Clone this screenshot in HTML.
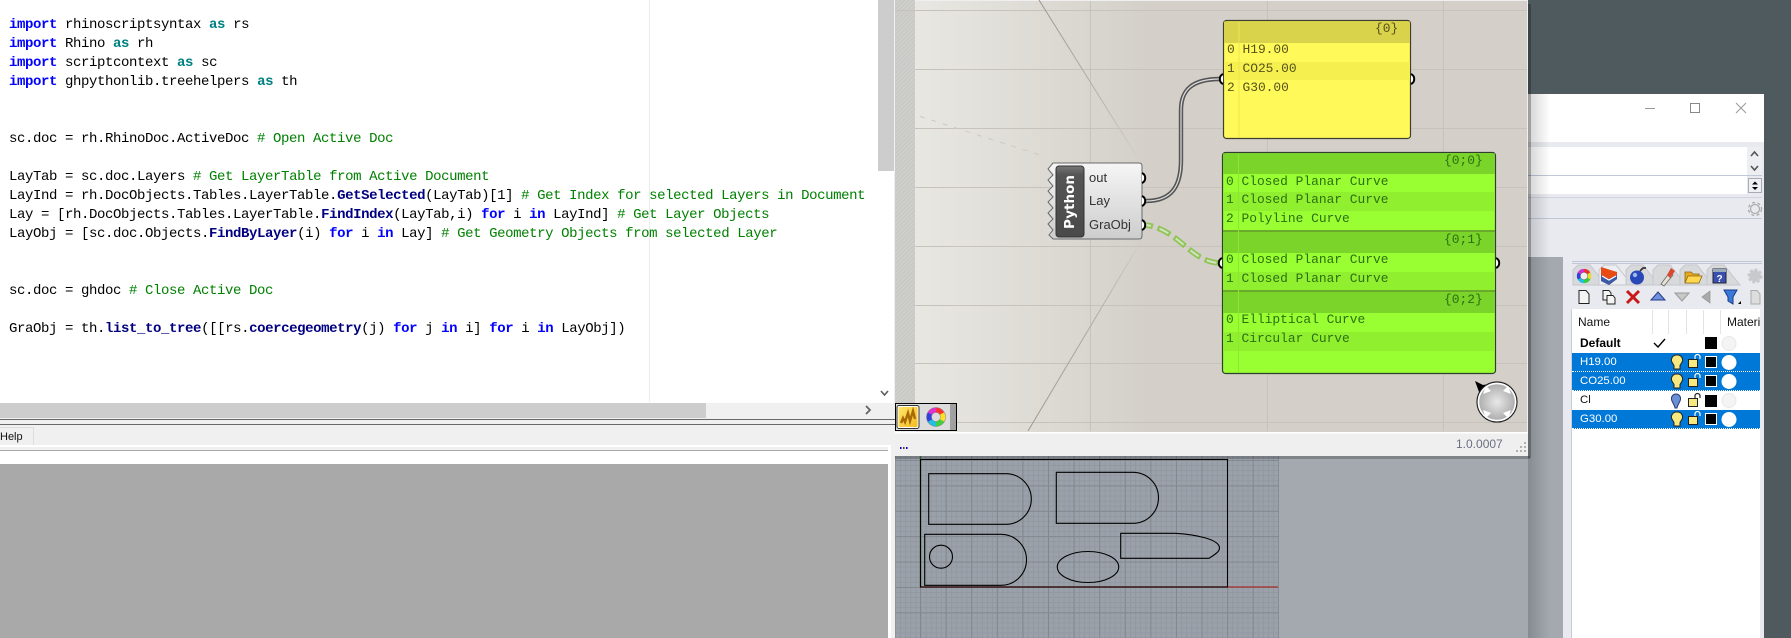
<!DOCTYPE html>
<html><head><meta charset="utf-8"><style>
html,body{margin:0;padding:0}
body{width:1791px;height:638px;overflow:hidden;position:relative;background:#4f5a5f;font-family:"Liberation Sans",sans-serif}
.a{position:absolute}
.c{position:absolute;left:9px;font:14px/19px "Liberation Mono",monospace;letter-spacing:-.4px;white-space:pre;color:#000;height:19px}
.k{color:#00f;font-weight:bold}.t{color:#008080;font-weight:bold}.g{color:#008000}.f{color:#000080;font-weight:bold}
.p{position:absolute;font:12.9px/16px "Liberation Mono",monospace;white-space:pre}
.y{color:#55521a}.n{color:#2d6f10}
.l{position:absolute;font-size:13px;line-height:16px;color:#333}
.r{position:absolute;font-size:11.4px;line-height:19px;white-space:pre}
.sel{position:absolute;left:1572px;width:188px;background:#0078d7;border-bottom:1px dotted #fff;box-sizing:border-box}
</style></head><body>

<!-- Rhino window behind -->
<div class="a" style="left:1528px;top:94px;width:236px;height:544px;background:#e8eaef"></div>
<div class="a" style="left:1528px;top:94px;width:236px;height:48px;background:#fff"></div>
<div class="a" style="left:1528px;top:147px;width:219px;height:28px;background:#fff"></div>
<div class="a" style="left:1528px;top:175px;width:234px;height:1px;background:#c0c8d8"></div>
<div class="a" style="left:1528px;top:176px;width:219px;height:18px;background:#fff"></div>
<div class="a" style="left:1528px;top:197px;width:234px;height:1px;background:#d0d4de"></div>
<div class="a" style="left:1528px;top:218px;width:234px;height:1px;background:#c0c8d8"></div>
<div class="a" style="left:1572px;top:261px;width:190px;height:1px;background:#c0c8d8"></div>
<div class="a" style="left:1572px;top:263px;width:190px;height:1px;background:#c0c8d8"></div>

<!-- viewport -->
<div class="a" style="left:895px;top:257px;width:668px;height:381px;background:#a3a9af"></div>
<div class="a" style="left:895px;top:456px;width:384px;height:182px;background-color:#9ba1ab;background-image:linear-gradient(90deg,#83878e 1px,transparent 1px),linear-gradient(#83878e 1px,transparent 1px),linear-gradient(90deg,#93989f 1px,transparent 1px),linear-gradient(#93989f 1px,transparent 1px);background-size:25.6px 25.4px,25.6px 25.4px,5.12px 5.08px,5.12px 5.08px;background-position:25px 4px,25px 4px,0px 4px,0px 4px"></div>

<!-- layer panel list -->
<div class="a" style="left:1571px;top:309px;width:189px;height:329px;background:#fff;border-left:1px solid #c8ccd4;box-sizing:border-box"></div>
<div class="a" style="left:1578px;top:313px;font-size:12px;line-height:19px;color:#111">Name</div>
<div class="a" style="left:1727px;top:313px;width:33px;overflow:hidden;font-size:12px;line-height:19px;color:#111">Materi</div>
<div class="a" style="left:1652px;top:310px;width:1px;height:24px;background:#e3e3e3"></div>
<div class="a" style="left:1668px;top:310px;width:1px;height:24px;background:#e3e3e3"></div>
<div class="a" style="left:1686px;top:310px;width:1px;height:24px;background:#e3e3e3"></div>
<div class="a" style="left:1703px;top:310px;width:1px;height:24px;background:#e3e3e3"></div>
<div class="a" style="left:1720px;top:310px;width:1px;height:24px;background:#e3e3e3"></div>
<div class="sel" style="top:353px;height:19px"></div>
<div class="sel" style="top:372px;height:19px"></div>
<div class="sel" style="top:410px;height:19px"></div>
<div class="r" style="left:1580px;top:334px;font-size:12px;font-weight:bold;color:#000">Default</div>
<div class="r" style="left:1580px;top:353px;color:#fff">H19.00</div>
<div class="r" style="left:1580px;top:372px;color:#fff">CO25.00</div>
<div class="r" style="left:1580px;top:391px;color:#111">Cl</div>
<div class="r" style="left:1580px;top:410px;color:#fff">G30.00</div>

<!-- graphics -->
<svg class="a" style="left:0;top:0" width="1791" height="638" viewBox="0 0 1791 638">
<defs>
<linearGradient id="cv" x1="0" x2="1" y1="0" y2="0"><stop offset="0" stop-color="#e8e7e2"/><stop offset=".38" stop-color="#d4d0c9"/><stop offset="1" stop-color="#d4d0c9"/></linearGradient>
<linearGradient id="cmp" x1="0" x2="0" y1="0" y2="1"><stop offset="0" stop-color="#f6f6f6"/><stop offset="1" stop-color="#cdcdcd"/></linearGradient>
<linearGradient id="tab" x1="0" x2="0" y1="0" y2="1"><stop offset="0" stop-color="#777"/><stop offset=".12" stop-color="#555"/><stop offset="1" stop-color="#4a4a4a"/></linearGradient>
<linearGradient id="sh" x1="0" x2="1" y1="0" y2="0"><stop offset="0" stop-color="#000" stop-opacity=".35"/><stop offset="1" stop-color="#000" stop-opacity="0"/></linearGradient>
<linearGradient id="ylw" x1="0" x2="1" y1="0" y2="1"><stop offset="0" stop-color="#ffe870"/><stop offset="1" stop-color="#f4b91c"/></linearGradient>
<linearGradient id="d1" gradientUnits="userSpaceOnUse" x1="1039" y1="0" x2="1139" y2="160"><stop offset="0" stop-color="#9a978f"/><stop offset=".6" stop-color="#b5b2aa"/><stop offset="1" stop-color="#d4d0c9"/></linearGradient>
<linearGradient id="d2" gradientUnits="userSpaceOnUse" x1="1028" y1="431" x2="1143" y2="238"><stop offset="0" stop-color="#9a978f"/><stop offset=".6" stop-color="#b0ada5"/><stop offset="1" stop-color="#d4d0c9"/></linearGradient>
<radialGradient id="nav"><stop offset="0" stop-color="#e8e8e8"/><stop offset="1" stop-color="#a8a8a8"/></radialGradient>
<pattern id="hatch" width="3" height="3" patternUnits="userSpaceOnUse" patternTransform="rotate(45)"><rect width="3" height="3" fill="#cfcfcc"/><rect width="1.500" height="3" fill="#c8c8c5"/></pattern>
</defs>

<!-- shadow from GH window on rhino window -->
<rect x="1528" y="94" width="22" height="545" fill="url(#sh)" opacity=".5"/>

<!-- viewport shapes -->
<g fill="none" stroke="#000" stroke-width="1.100">
<line x1="920.500" y1="456" x2="920.500" y2="587" stroke="#3f7a3f" stroke-width="1.500"/>
<line x1="920" y1="587" x2="1278" y2="587" stroke="#a33f3f" stroke-width="1.600"/>
<path d="M920.500 459.500H1227.500V587H920.500Z"/>
<path d="M928.700 473.700H1006A25.300 25.300 0 0 1 1006 524.300H928.700Z"/>
<path d="M1056.300 472.300H1133A25.500 25.500 0 0 1 1133 523.300H1056.300Z"/>
<path d="M924.700 534.300H1001A25.500 25.500 0 0 1 1001 585.300H924.700Z"/>
<circle cx="941" cy="556.700" r="11.500"/>
<ellipse cx="1088" cy="567" rx="30.700" ry="15.500"/>
<path d="M1120.700 533.300H1175C1195 534.500 1219.500 539 1219.500 548C1219.500 552 1214 555 1209 558.300H1120.700Z"/>
</g>

<!-- GH window -->
<rect x="895" y="0" width="633" height="456" fill="#efefef"/>
<rect x="895" y="0" width="20" height="431" fill="url(#hatch)"/>
<rect x="915" y="1" width="612" height="431" fill="url(#cv)"/>
<rect x="895" y="432" width="633" height="1.500" fill="#fff"/>
<rect x="1528" y="4" width="3" height="454" fill="#000" opacity=".25"/>
<rect x="895" y="456" width="635" height="3" fill="#000" opacity=".22"/>
<g stroke="#c7c3bb" stroke-width="1">
<path d="M1090.500 1V431M1267.500 1V431M1443.500 1V431"/>
<path d="M895 10.500H1527M915 69.500H1527M915 128.500H1527M915 187.500H1527M915 246.500H1527M915 305.500H1527M915 363.500H1527M915 422.500H1527"/>
</g>
<path d="M1039 0L1139 160" stroke="url(#d1)" stroke-width="1" fill="none"/>
<path d="M1143 238L1028 431" stroke="url(#d2)" stroke-width="1" fill="none"/>
<path d="M897 109L1040 155" stroke="#cdcac3" stroke-width="1" stroke-dasharray="5 7" fill="none"/>

<!-- wires -->
<path d="M1146 201C1172 201 1181 186 1181 160C1181 140 1181 125 1181 110C1181 90 1192 79 1220 79" fill="none" stroke="#555" stroke-width="4.400"/>
<path d="M1146 201C1172 201 1181 186 1181 160C1181 140 1181 125 1181 110C1181 90 1192 79 1220 79" fill="none" stroke="#ddd" stroke-width="1.200"/>
<path d="M1146 225C1180 230 1190 262 1220 263" fill="none" stroke="#8fc457" stroke-width="5.500" stroke-dasharray="14 5" stroke-dashoffset="7"/>
<path d="M1146 225C1180 230 1190 262 1220 263" fill="none" stroke="#d2e3bd" stroke-width="2" stroke-dasharray="10 9" stroke-dashoffset="5"/>

<!-- yellow panel -->
<rect x="1223.500" y="20.500" width="187" height="118" rx="3" fill="#fff95a" stroke="#3f3f2f" stroke-width="1.200"/>
<rect x="1224" y="21.500" width="186" height="21.500" fill="#d9d24b"/>
<rect x="1224" y="62" width="186" height="18" fill="#f5f050"/>
<rect x="1238.500" y="22" width="1" height="115" fill="#ece650"/>

<!-- green panel -->
<rect x="1222.500" y="152.500" width="273" height="221" rx="3" fill="#99ff33" stroke="#2f3f2f" stroke-width="1.200"/>
<rect x="1223" y="153.500" width="272" height="20.500" fill="#7ad42a"/>
<rect x="1223" y="192" width="272" height="19" fill="#90f030"/>
<rect x="1223" y="230" width="272" height="2" fill="#6aaa2a"/>
<rect x="1223" y="232" width="272" height="21" fill="#7ad42a"/>
<rect x="1223" y="272" width="272" height="19" fill="#90f030"/>
<rect x="1223" y="290" width="272" height="2" fill="#6aaa2a"/>
<rect x="1223" y="292" width="272" height="21" fill="#7ad42a"/>
<rect x="1223" y="332" width="272" height="19" fill="#90f030"/>
<rect x="1238" y="154" width="1" height="218" fill="#8ce82f"/>

<!-- grips -->
<g fill="#fff" stroke="#000" stroke-width="2">
<path d="M1223 74a5.500 5.500 0 0 0 0 10"/>
<path d="M1411 74a5.500 5.500 0 0 1 0 10"/>
<path d="M1222 258a5.500 5.500 0 0 0 0 10"/>
<path d="M1496 258a5.500 5.500 0 0 1 0 10"/>
</g>

<!-- python component -->
<path d="M1053 163H1139Q1142 163 1142 166V236Q1142 239 1139 239H1053L1049 235L1053 230L1048 224L1053 219L1048 213L1053 208L1048 202L1053 197L1048 191L1053 186L1048 180L1053 175L1048 169Z" fill="url(#cmp)" stroke="#6a6a6a" stroke-width="1"/>
<rect x="1056" y="166" width="28" height="71" rx="3" fill="url(#tab)" stroke="#333" stroke-width="1"/>
<g fill="#fff" stroke="#000" stroke-width="2">
<path d="M1142 173a5.500 5.500 0 0 1 0 10"/>
<path d="M1142 196a5.500 5.500 0 0 1 0 10"/>
<path d="M1142 220a5.500 5.500 0 0 1 0 10"/>
</g>

<!-- navigator -->
<path d="M1475 381L1483 385L1489 384L1482 396L1479 392Z" fill="#000"/>
<circle cx="1497" cy="402" r="20" fill="url(#nav)" stroke="#222" stroke-width="1.200"/>
<circle cx="1497" cy="402" r="18.600" fill="none" stroke="#fff" stroke-width="1.600"/>
<g fill="#fff"><path d="M1486 386l-3 8 8-3z"/><path d="M1508 386l3 8-8-3z"/><path d="M1486 418l-3-8 8 3z"/><path d="M1508 418l3-8-8 3z"/></g>
<g fill="#b0b0b0"><rect x="1524" y="442" width="2" height="2"/><rect x="1520" y="446" width="2" height="2"/><rect x="1524" y="446" width="2" height="2"/><rect x="1516" y="450" width="2" height="2"/><rect x="1520" y="450" width="2" height="2"/><rect x="1524" y="450" width="2" height="2"/></g>

<!-- toolbar popup -->
<rect x="895.500" y="403.500" width="61" height="27" fill="#dcdcdc" stroke="#000" stroke-width="1"/>
<rect x="950" y="404" width="6" height="26" fill="#a0a0a0"/>
<rect x="897" y="405.500" width="22" height="23" rx="2" fill="url(#ylw)" stroke="#333" stroke-width="1"/>
<rect x="898" y="406.500" width="20" height="21" rx="1.500" fill="none" stroke="#fff" stroke-width="1"/>
<path d="M901 423l2-5 2 4 3-9 2 8 3-10 2 8" fill="none" stroke="#a86a08" stroke-width="2.400"/>
<circle cx="936" cy="417" r="7" fill="none" stroke="#888" stroke-width="5.600"/>
<g fill="none" stroke-width="4.600">
<path d="M936 410a7 7 0 0 1 6 3.500" stroke="#ff3030"/><path d="M942 413.500a7 7 0 0 1 0 7" stroke="#ffe020"/><path d="M942 420.500a7 7 0 0 1 -6 3.500" stroke="#40d040"/><path d="M936 424a7 7 0 0 1 -6 -3.500" stroke="#20c0e0"/><path d="M930 420.500a7 7 0 0 1 0 -7" stroke="#3040e0"/><path d="M930 413.500a7 7 0 0 1 6 -3.500" stroke="#e030d0"/>
</g>
<g fill="#00a"><rect x="900" y="447" width="1.500" height="2"/><rect x="903" y="447" width="1.500" height="2" fill="#633"/><rect x="906" y="447" width="1.500" height="2"/></g>

<!-- rhino window controls -->
<path d="M1645 108.500H1655" stroke="#999" stroke-width="1"/>
<rect x="1690.500" y="103.500" width="9" height="9" fill="none" stroke="#888" stroke-width="1"/>
<path d="M1736 103L1746 113M1746 103L1736 113" stroke="#999" stroke-width="1"/>
<rect x="1747" y="147" width="15" height="28" fill="#eceef2"/>
<path d="M1751 156l3.500-4 3.500 4M1751 166l3.500 4 3.500-4" fill="none" stroke="#555" stroke-width="1.600"/>
<rect x="1748.500" y="178.500" width="13" height="14" fill="#eef0f4" stroke="#a8acb4"/>
<path d="M1752 184.500h6l-3-3zM1752 187h6l-3 3z" fill="#000"/>
<circle cx="1755" cy="209" r="4.500" fill="none" stroke="#aaa" stroke-width="1.200"/>
<circle cx="1755" cy="209" r="6.500" fill="none" stroke="#aaa" stroke-width="1.300" stroke-dasharray="3 2.500"/>

<!-- panel tabs -->
<g fill="#d8d9db" stroke="#c4c7ce" stroke-width="1">
<path d="M1573 285V270L1578 265H1590L1606 285Z"/>
<path d="M1599 285V270L1604 265H1616L1632 285Z" fill="#eceef2"/>
<path d="M1626 285V270L1631 265H1643L1659 285Z"/>
<path d="M1653 285V270L1658 265H1670L1686 285Z"/>
<path d="M1680 285V270L1685 265H1697L1713 285Z"/>
<path d="M1707 285V270L1712 265H1724L1740 285Z"/>
</g>
<circle cx="1584" cy="276" r="7" fill="#555"/>
<g fill="none" stroke-width="3.200">
<path d="M1584 270.500a5.500 5.500 0 0 1 4.800 2.800" stroke="#f03030"/><path d="M1588.800 273.300a5.500 5.500 0 0 1 0 5.400" stroke="#e8e020"/><path d="M1588.800 278.700a5.500 5.500 0 0 1 -4.800 2.800" stroke="#30d040"/><path d="M1584 281.500a5.500 5.500 0 0 1 -4.800 -2.800" stroke="#20c0e0"/><path d="M1579.200 278.700a5.500 5.500 0 0 1 0 -5.400" stroke="#3040e0"/><path d="M1579.200 273.300a5.500 5.500 0 0 1 4.800 -2.800" stroke="#d030d0"/>
</g>
<circle cx="1584" cy="276" r="3.500" fill="#eee"/>
<path d="M1601 267L1617 272V279L1609 285L1601 281Z" fill="#e84a14"/>
<path d="M1601 275L1609 279L1617 275V279L1609 285L1601 281Z" fill="#3a5aa8"/>
<path d="M1602 276L1609 280L1616 276" fill="none" stroke="#fff" stroke-width="1.200"/>
<circle cx="1637" cy="277.500" r="7" fill="#2848b8"/><circle cx="1635" cy="275" r="2.200" fill="#a0b8f0"/>
<path d="M1640 271l3-3h3" fill="none" stroke="#333" stroke-width="1.800"/>
<path d="M1661 284L1670 272L1673 275L1664 286Z" fill="#e8e2d4" stroke="#666" stroke-width=".8"/>
<path d="M1667 275L1671 268L1675 271L1670 278Z" fill="#d84830"/>
<path d="M1685 283V272H1691L1693 274H1699V283Z" fill="#e8a820" stroke="#8a6a10" stroke-width=".8"/>
<path d="M1685 283L1688 276H1702L1699 283Z" fill="#ffd850" stroke="#8a6a10" stroke-width=".8"/>
<rect x="1713" y="269" width="13" height="14" fill="#3a50b0" stroke="#223" stroke-width="1"/>
<rect x="1713" y="269" width="13" height="3" fill="#9ab"/>
<text x="1719.500" y="282" font-family="Liberation Sans,sans-serif" font-size="10" font-weight="bold" fill="#fff" text-anchor="middle">?</text>
<circle cx="1755" cy="276" r="5" fill="#c8c9cc" stroke="#c8c9cc" stroke-width="1.500"/>
<circle cx="1755" cy="276" r="6.500" fill="none" stroke="#c8c9cc" stroke-width="2" stroke-dasharray="3 2"/>

<!-- panel toolbar -->
<path d="M1579 290.500H1586L1589 294V303.500H1579Z" fill="#f4f4f4" stroke="#222" stroke-width="1"/>
<path d="M1603 290.500H1609L1611 293V300H1603Z" fill="#f4f4f4" stroke="#222" stroke-width="1"/>
<path d="M1607 295.500H1613L1615 298V304H1607Z" fill="#f4f4f4" stroke="#222" stroke-width="1"/>
<path d="M1627 291L1639 303M1639 291L1627 303" stroke="#c81818" stroke-width="3"/>
<path d="M1651 300L1658 292L1665 300Z" fill="#7090e0" stroke="#223a88" stroke-width="1"/>
<path d="M1675 293L1682 301L1689 293Z" fill="#c8c8c8" stroke="#999" stroke-width="1"/>
<path d="M1710 291V303L1702 297Z" fill="#aaa" stroke="#999" stroke-width=".8"/>
<path d="M1724 290H1737L1733 297V304L1728 301V297Z" fill="#3a7ad8" stroke="#1a3a88" stroke-width="1"/>
<path d="M1738 304l3-3v3z" fill="#000"/>
<path d="M1751 290.500H1757L1760 294V304H1751Z" fill="#ddd" stroke="#aaa" stroke-width="1"/>

<!-- layer row icons -->
<path d="M1654 343l4 4 7-8" fill="none" stroke="#000" stroke-width="1.400"/>
<rect x="1705" y="337" width="12" height="12" fill="#000"/>
<circle cx="1729" cy="343.500" r="7" fill="#f4f4f4" stroke="#e8e8e8"/>
<g id="ic">
<path d="M1677 355a5 5 0 0 1 4.500 8l-1.500 2.500v3.500h-6v-3.500l-1.500-2.500a5 5 0 0 1 4.500-8z" fill="#f8e880" stroke="#222" stroke-width="1"/>
<rect x="1688.500" y="359.500" width="9" height="8" fill="#f8e880" stroke="#222"/><path d="M1695 359v-2a2.500 2.500 0 0 1 5 0v2" fill="none" stroke="#fff" stroke-width="1.200"/>
<rect x="1705.500" y="356.500" width="11" height="11" fill="#000" stroke="#fff"/>
<circle cx="1729" cy="362.500" r="7.500" fill="#fff"/>
</g>
<use href="#ic" y="19"/>
<use href="#ic" y="57"/>
<path d="M1676 394a4.500 4.500 0 0 1 4.500 5c0 3-3 5-3.500 9h-2c-.5-4-3.500-6-3.500-9a4.500 4.500 0 0 1 4.500-5z" fill="#6a90d8" stroke="#2a3a70" stroke-width="1"/>
<rect x="1688.500" y="398.500" width="9" height="8" fill="#f8e880" stroke="#222"/><path d="M1695 398v-2a2.500 2.500 0 0 1 5 0v2" fill="none" stroke="#222" stroke-width="1.200"/>
<rect x="1705" y="395" width="12" height="12" fill="#000"/>
<circle cx="1729" cy="400.500" r="7" fill="#f4f4f4" stroke="#e8e8e8"/>
</svg>

<!-- GH panel texts -->
<div class="p y" style="left:1375px;top:21px">{0}</div>
<div class="p y" style="left:1227px;top:42px">0 H19.00</div>
<div class="p y" style="left:1227px;top:61px">1 CO25.00</div>
<div class="p y" style="left:1227px;top:80px">2 G30.00</div>
<div class="p n" style="left:1444px;top:153px">{0;0}</div>
<div class="p n" style="left:1226px;top:174px">0 Closed Planar Curve</div>
<div class="p n" style="left:1226px;top:192px">1 Closed Planar Curve</div>
<div class="p n" style="left:1226px;top:211px">2 Polyline Curve</div>
<div class="p n" style="left:1444px;top:232px">{0;1}</div>
<div class="p n" style="left:1226px;top:252px">0 Closed Planar Curve</div>
<div class="p n" style="left:1226px;top:271px">1 Closed Planar Curve</div>
<div class="p n" style="left:1444px;top:292px">{0;2}</div>
<div class="p n" style="left:1226px;top:312px">0 Elliptical Curve</div>
<div class="p n" style="left:1226px;top:331px">1 Circular Curve</div>

<div class="a" style="left:1030px;top:190.500px;width:80px;height:22px;line-height:22px;text-align:center;font-family:'DejaVu Sans',sans-serif;font-size:13.500px;font-weight:bold;color:#fff;transform:rotate(-90deg)">Python</div>
<div class="l" style="left:1089px;top:170px">out</div>
<div class="l" style="left:1089px;top:193px">Lay</div>
<div class="l" style="left:1089px;top:217px">GraObj</div>
<div class="a" style="left:1456px;top:436px;font-size:12px;line-height:16px;color:#6a7082">1.0.0007</div>

<!-- left editor -->
<div class="a" style="left:0;top:0;width:895px;height:638px;background:#f0f0f0"></div>
<div class="a" style="left:0;top:0;width:894px;height:403px;background:#fff"></div>
<div class="a" style="left:649px;top:0;width:1px;height:402px;background:#ececec"></div>
<div class="a" style="left:878px;top:0;width:16px;height:171px;background:#cdcdcd"></div>
<div class="a" style="left:0;top:403px;width:706px;height:15px;background:#cdcdcd"></div>
<div class="a" style="left:0;top:419px;width:895px;height:1px;background:#696969"></div>
<div class="a" style="left:0;top:424px;width:895px;height:1px;background:#696969"></div>
<div class="a" style="left:0;top:427px;width:33px;height:18px;border:1px solid #ddd;border-left:0;border-bottom:0;font-size:11px;line-height:19px;color:#111">Help</div>
<div class="a" style="left:0;top:445px;width:891px;height:2px;background:#fff"></div>
<div class="a" style="left:0;top:447px;width:888px;height:3px;background:#f0f0f0"></div>
<div class="a" style="left:0;top:450px;width:888px;height:1px;background:#aaa"></div>
<div class="a" style="left:0;top:451px;width:888px;height:13px;background:#fff"></div>
<div class="a" style="left:0;top:464px;width:888px;height:174px;background:#a9a9a9"></div>
<div class="a" style="left:888px;top:445px;width:3px;height:193px;background:#fff"></div>
<svg class="a" style="left:860px;top:385px" width="34" height="32"><path d="M21 6l3.500 4 3.500-4" fill="none" stroke="#606060" stroke-width="1.700"/><path d="M6 21l4 4-4 4" fill="none" stroke="#606060" stroke-width="1.700"/></svg>

<div class="c" style="top:16px"><span class="k">import</span> rhinoscriptsyntax <span class="t">as</span> rs</div>
<div class="c" style="top:35px"><span class="k">import</span> Rhino <span class="t">as</span> rh</div>
<div class="c" style="top:54px"><span class="k">import</span> scriptcontext <span class="t">as</span> sc</div>
<div class="c" style="top:73px"><span class="k">import</span> ghpythonlib.treehelpers <span class="t">as</span> th</div>
<div class="c" style="top:130px">sc.doc = rh.RhinoDoc.ActiveDoc <span class="g"># Open Active Doc</span></div>
<div class="c" style="top:168px">LayTab = sc.doc.Layers <span class="g"># Get LayerTable from Active Document</span></div>
<div class="c" style="top:187px">LayInd = rh.DocObjects.Tables.LayerTable.<span class="f">GetSelected</span>(LayTab)[1] <span class="g"># Get Index for selected Layers in Document</span></div>
<div class="c" style="top:206px">Lay = [rh.DocObjects.Tables.LayerTable.<span class="f">FindIndex</span>(LayTab,i) <span class="k">for</span> i <span class="k">in</span> LayInd] <span class="g"># Get Layer Objects</span></div>
<div class="c" style="top:225px">LayObj = [sc.doc.Objects.<span class="f">FindByLayer</span>(i) <span class="k">for</span> i <span class="k">in</span> Lay] <span class="g"># Get Geometry Objects from selected Layer</span></div>
<div class="c" style="top:282px">sc.doc = ghdoc <span class="g"># Close Active Doc</span></div>
<div class="c" style="top:320px">GraObj = th.<span class="f">list_to_tree</span>([[rs.<span class="f">coercegeometry</span>(j) <span class="k">for</span> j <span class="k">in</span> i] <span class="k">for</span> i <span class="k">in</span> LayObj])</div>
</body></html>
